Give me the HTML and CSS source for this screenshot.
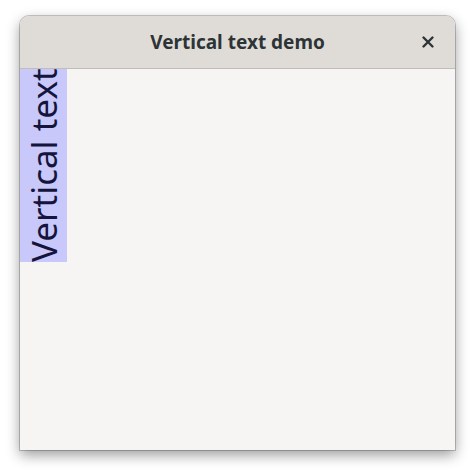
FILE: index.html
```html
<html>
<head>
    <title>Vertical text demo</title>
    <link rel="stylesheet" href="styles.css">
</head>
<body>
<div class="window">
    <div class="titlebar">
        <span class="title">Vertical text demo</span>
        <span class="close">
            <svg width="14" height="14" viewBox="0 0 14 14">
                <path d="M2.5 2.5 L11.5 11.5 M11.5 2.5 L2.5 11.5" stroke="#2e3436" stroke-width="2.4" stroke-linecap="round"/>
            </svg>
        </span>
    </div>
    <div class="content">
        <div class="vlabel">Vertical text</div>
    </div>
</div>
</body>
</html>
```

FILE: styles.css
```css
body {
    margin: 0;
    background: #ffffff;
    font-family: "Noto Sans", sans-serif;
}

.window {
    margin: 16px 0 0 20px;
    width: 435px;
    height: 434px;
    border-radius: 9px 9px 0 0;
    background: #f6f5f4;
    box-shadow: 0 0 0 1px rgba(0, 0, 0, 0.2), 0 5px 14px rgba(0, 0, 0, 0.4);
    display: flex;
    flex-direction: column;
    overflow: hidden;
}

.titlebar {
    height: 52px;
    flex: none;
    background: #dfdcd8;
    border-bottom: 1px solid #c0bdb9;
    display: flex;
    align-items: center;
    justify-content: center;
    position: relative;
}

.title {
    font-weight: bold;
    font-size: 19px;
    color: #2e3436;
}

.close {
    position: absolute;
    right: 20px;
    top: 19px;
    width: 14px;
    height: 14px;
}

.content {
    flex: 1;
    display: flex;
    align-items: flex-start;
}

.vlabel {
    writing-mode: vertical-rl;
    transform: rotate(180deg);
    background: #c8c8fa;
    color: #14143c;
    font-size: 35px;
    line-height: 47px;
    width: 47px;
    height: 193px;
    text-align: left;
    white-space: nowrap;
    overflow: hidden;
}
```
